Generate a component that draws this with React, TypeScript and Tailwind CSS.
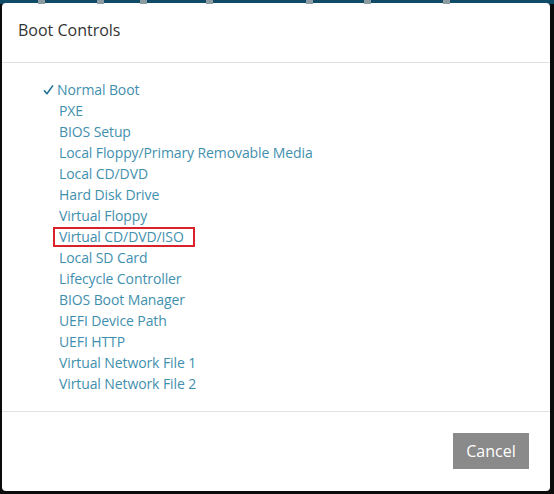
const bootOptions = [
  "Normal Boot",
  "PXE",
  "BIOS Setup",
  "Local Floppy/Primary Removable Media",
  "Local CD/DVD",
  "Hard Disk Drive",
  "Virtual Floppy",
  "Virtual CD/DVD/ISO",
  "Local SD Card",
  "Lifecycle Controller",
  "BIOS Boot Manager",
  "UEFI Device Path",
  "UEFI HTTP",
  "Virtual Network File 1",
  "Virtual Network File 2",
]

const selected = "Normal Boot"
const highlighted = "Virtual CD/DVD/ISO"

// bits of the page behind the modal that peek out along the top edge
const stripMarks = [38, 97, 140, 206, 306, 364, 443]

export default function App() {
  return (
    <div
      className="relative h-[494px] w-[554px] overflow-hidden bg-[#0b0b0b]"
      style={{ fontFamily: '"Open Sans", "Liberation Sans", sans-serif' }}
    >
      <div className="flex h-[4px] bg-[#0f4a66]">
        {stripMarks.map((x) => (
          <span key={x} className="absolute top-0 h-[4px] w-[7px] bg-[#8c9aa2]" style={{ left: x }} />
        ))}
      </div>
      <div className="ml-[2px] -mt-[1px] flex h-[488px] w-[548px] flex-col rounded-[4px] bg-white">
        <div className="flex h-[60px] items-center border-b border-[#e2e2e2] px-4 pb-[6px]">
          <h1 className="text-[16px] text-[#333333]">Boot Controls</h1>
        </div>
        <ul className="flex flex-1 flex-col pl-[57px] pt-[16px]">
          {bootOptions.map((name) => (
            <li key={name} className="flex h-[21px] items-center text-[14px] tracking-[-0.1px] text-[#3f90ae]">
              {name === selected && (
                <svg viewBox="0 0 12 12" className="-ml-[16px] mr-[4px] h-[12px] w-[11px]">
                  <path d="M1.5 6.8 L4.3 10 L10.5 1.5" fill="none" stroke="#1c6f92" strokeWidth="1.7" strokeLinecap="round" strokeLinejoin="round" />
                </svg>
              )}
              <span
                className={
                  name === highlighted
                    ? "-ml-[6px] border-2 border-[#d8232c] pl-[4px] pr-[9px] leading-[16px]"
                    : name === selected
                      ? "-ml-[1px]"
                      : ""
                }
              >
                {name}
              </span>
            </li>
          ))}
        </ul>
        <div className="flex h-[80px] items-center justify-end border-t border-[#e2e2e2] px-[21px] pb-[2px]">
          <button className="h-[36px] w-[76px] bg-[#8a8a8a] text-[16px] text-white">Cancel</button>
        </div>
      </div>
    </div>
  )
}
